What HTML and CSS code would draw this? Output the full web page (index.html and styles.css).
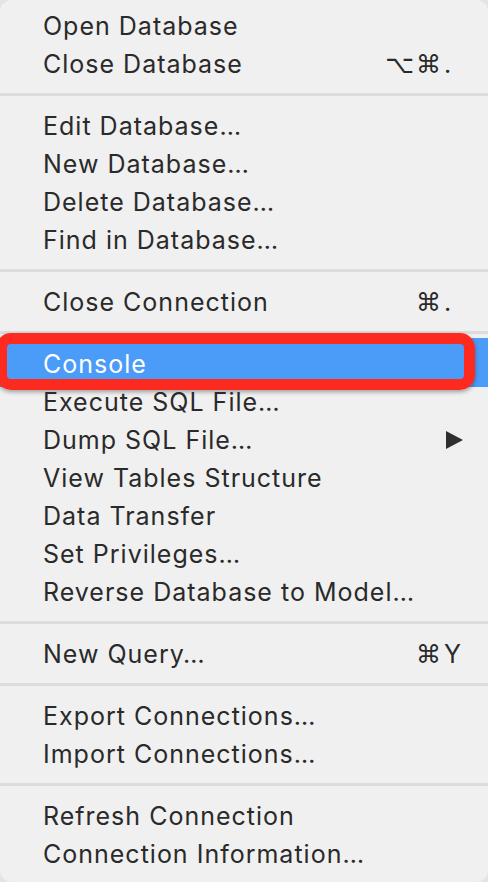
FILE: index.html
```html
<!DOCTYPE html>
<html>
<head>
<meta charset="utf-8">
<link rel="stylesheet" href="styles.css">
</head>
<body>
<div class="menu">
  <div class="item"><span class="label">Open Database</span></div>
  <div class="item"><span class="label">Close Database</span><span class="sc"><span class="mods">⌥⌘</span><span class="key">.</span></span></div>
  <div class="sep"></div>
  <div class="item"><span class="label">Edit Database…</span></div>
  <div class="item"><span class="label">New Database…</span></div>
  <div class="item"><span class="label">Delete Database…</span></div>
  <div class="item"><span class="label">Find in Database…</span></div>
  <div class="sep"></div>
  <div class="item"><span class="label">Close Connection</span><span class="sc"><span class="mods">⌘</span><span class="key">.</span></span></div>
  <div class="sep"></div>
  <div class="item selected"><span class="label">Console</span><span class="annot"></span></div>
  <div class="item"><span class="label">Execute SQL File…</span></div>
  <div class="item"><span class="label">Dump SQL File…</span><svg class="arrow" width="17" height="18" viewBox="0 0 17 18"><polygon points="0,0 17,9 0,18" fill="#2f2f2f"/></svg></div>
  <div class="item"><span class="label">View Tables Structure</span></div>
  <div class="item"><span class="label">Data Transfer</span></div>
  <div class="item"><span class="label">Set Privileges…</span></div>
  <div class="item"><span class="label">Reverse Database to Model…</span></div>
  <div class="sep"></div>
  <div class="item"><span class="label">New Query…</span><span class="sc"><span class="mods">⌘</span><span class="key">Y</span></span></div>
  <div class="sep"></div>
  <div class="item"><span class="label">Export Connections…</span></div>
  <div class="item"><span class="label">Import Connections…</span></div>
  <div class="sep"></div>
  <div class="item"><span class="label">Refresh Connection</span></div>
  <div class="item"><span class="label">Connection Information…</span></div>
</div>
</body>
</html>
```
FILE: styles.css
```css
html, body {
  margin: 0;
  padding: 0;
  background: #e4e4e4;
}
body {
  width: 488px;
  height: 882px;
  overflow: hidden;
}
.menu {
  box-sizing: border-box;
  width: 488px;
  height: 882px;
  background: #f0f0f0;
  border-radius: 12px;
  padding: 7px 0 9px;
  font-family: Inter, "Liberation Sans", sans-serif;
  font-size: 25px;
  letter-spacing: 1px;
  color: #2a2a2a;
}
.item {
  position: relative;
  height: 38px;
  display: flex;
  align-items: center;
  padding: 0 25px 0 43px;
}
.label {
  position: relative;
  z-index: 2;
  white-space: nowrap;
}
.sep {
  height: 3px;
  margin: 10px 0 11px;
  background: #dcdcdc;
}
.sc {
  margin-left: auto;
  display: flex;
  align-items: center;
}
.mods {
  font-family: "DejaVu Sans", sans-serif;
  font-size: 25px;
  letter-spacing: 2px;
  text-align: right;
}
.key {
  width: 20px;
  padding-left: 1px;
  box-sizing: border-box;
  letter-spacing: 0;
}
.arrow {
  margin-left: auto;
  display: block;
}
.selected {
  color: #ffffff;
}
.selected::before {
  content: "";
  position: absolute;
  left: 0;
  right: 0;
  top: -7px;
  bottom: -4px;
  background: #4b9bf8;
  z-index: 0;
}
.annot {
  position: absolute;
  left: -4px;
  width: 479px;
  top: -12px;
  height: 57px;
  box-sizing: border-box;
  border: 11px solid #fd2b1f;
  border-radius: 15px;
  box-shadow: 0 2px 4px rgba(0, 0, 0, 0.35);
  z-index: 1;
}
```
